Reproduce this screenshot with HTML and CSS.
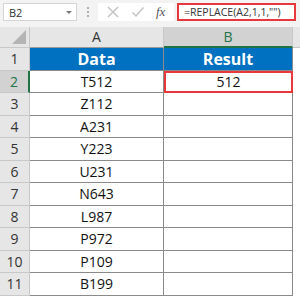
FILE: index.html
```html
<!DOCTYPE html>
<html lang="en">
<head>
    <meta charset="UTF-8">
    <title>REPLACE example</title>
    <link rel="stylesheet" href="styles.css">
</head>
<body>
    <div class="toolbar">
        <div class="name-box">
            <span>B2</span>
            <span class="caret"></span>
        </div>
        <div class="grip"></div>
        <div class="tool-icons">
            <svg width="14" height="14" viewBox="0 0 14 14"><path d="M2 2 L12 12 M12 2 L2 12" stroke="#c4c4c4" stroke-width="1.5" fill="none"/></svg>
            <svg width="14" height="14" viewBox="0 0 14 14"><path d="M1.5 7.5 L5 11 L12.5 2.5" stroke="#c4c4c4" stroke-width="1.5" fill="none"/></svg>
            <span class="fx">fx</span>
        </div>
        <div class="formula-box">=REPLACE(A2,1,1,"")</div>
    </div>

    <div class="sheet">
        <div class="corner"><span class="tri"></span></div>
        <div class="col-head">A</div>
        <div class="col-head selected">B</div>
        <div class="col-rest"></div>

        <div class="row-head">1</div>
        <div class="cell title">Data</div>
        <div class="cell title">Result</div>
        <div class="rest"></div>

        <div class="row-head selected">2</div>
        <div class="cell">T512</div>
        <div class="cell active">512</div>
        <div class="rest"></div>

        <div class="row-head">3</div>
        <div class="cell">Z112</div>
        <div class="cell"></div>
        <div class="rest"></div>

        <div class="row-head">4</div>
        <div class="cell">A231</div>
        <div class="cell"></div>
        <div class="rest"></div>

        <div class="row-head">5</div>
        <div class="cell">Y223</div>
        <div class="cell"></div>
        <div class="rest"></div>

        <div class="row-head">6</div>
        <div class="cell">U231</div>
        <div class="cell"></div>
        <div class="rest"></div>

        <div class="row-head">7</div>
        <div class="cell">N643</div>
        <div class="cell"></div>
        <div class="rest"></div>

        <div class="row-head">8</div>
        <div class="cell">L987</div>
        <div class="cell"></div>
        <div class="rest"></div>

        <div class="row-head">9</div>
        <div class="cell">P972</div>
        <div class="cell"></div>
        <div class="rest"></div>

        <div class="row-head">10</div>
        <div class="cell">P109</div>
        <div class="cell"></div>
        <div class="rest"></div>

        <div class="row-head">11</div>
        <div class="cell">B199</div>
        <div class="cell"></div>
        <div class="rest"></div>
    </div>
</body>
</html>
```

FILE: styles.css
```css
* {
    margin: 0;
    padding: 0;
    box-sizing: border-box;
}

body {
    font-family: "Open Sans", "Liberation Sans", sans-serif;
    background: #ffffff;
    color: #222;
    width: 300px;
    height: 297px;
    overflow: hidden;
}

.toolbar {
    display: flex;
    align-items: center;
    height: 24px;
    background: #f3f3f3;
    padding: 0 4px 0 3px;
}

.name-box {
    display: flex;
    align-items: center;
    justify-content: space-between;
    flex-shrink: 0;
    width: 74px;
    height: 18px;
    background: white;
    border: 1px solid #d4d4d4;
    padding: 0 4px 0 5px;
    font-size: 11px;
    color: #333;
}

.caret {
    width: 0;
    height: 0;
    border-left: 3px solid transparent;
    border-right: 3px solid transparent;
    border-top: 3px solid #777;
}

.grip {
    flex-shrink: 0;
    width: 2px;
    height: 10px;
    margin: 0 9px 0 10px;
    border-left: 2px dotted #b0b0b0;
}

.tool-icons {
    display: flex;
    align-items: center;
    flex-shrink: 0;
    gap: 11px;
    height: 18px;
    background: white;
    padding: 0 0 0 8px;
    width: 76px;
}

.fx {
    font-family: "Liberation Serif", serif;
    font-style: italic;
    font-size: 13px;
    color: #555;
}

.formula-box {
    flex: 1;
    height: 18px;
    margin-left: 3px;
    background: white;
    border: 2px solid #e8383d;
    padding: 0 0 0 5px;
    font-size: 10.5px;
    line-height: 14px;
    color: #333;
}

.sheet {
    display: grid;
    grid-template-columns: 30px 134px 129px 7px;
    grid-template-rows: 21px repeat(11, 22.5px);
    border-top: 3px solid #f3f3f3;
}

.corner {
    background: #e6e6e6;
    border-right: 1px solid #c8c8c8;
    border-bottom: 1px solid #c8c8c8;
    display: flex;
    align-items: flex-end;
    justify-content: flex-end;
    padding: 0 3px 3px 0;
}

.tri {
    width: 0;
    height: 0;
    border-left: 14px solid transparent;
    border-bottom: 14px solid #b4b4b4;
}

.col-head {
    background: #e6e6e6;
    border-right: 1px solid #c8c8c8;
    border-bottom: 1px solid #9a9a9a;
    text-align: center;
    font-size: 14px;
    line-height: 20px;
    color: #333;
}

.col-head.selected {
    background: #d2d2d2;
    color: #217346;
    border-bottom: 2px solid #217346;
}

.col-rest {
    background: #e6e6e6;
    border-bottom: 1px solid #c8c8c8;
}

.row-head {
    background: #e6e6e6;
    border-right: 1px solid #c8c8c8;
    border-bottom: 1px solid #c8c8c8;
    text-align: center;
    font-size: 14px;
    line-height: 22px;
    color: #333;
}

.row-head.selected {
    background: #d2d2d2;
    color: #217346;
    border-right: 2px solid #217346;
}

.cell {
    border-right: 1px solid #8a8a8a;
    border-bottom: 1px solid #8a8a8a;
    text-align: center;
    font-size: 14px;
    line-height: 22px;
    color: #111;
}

.cell.title {
    background: #0070c0;
    color: white;
    font-weight: bold;
    font-size: 16px;
}

.cell.active {
    border: 2px solid #e8383d;
    line-height: 18px;
}

.rest {
    background: white;
}
```
